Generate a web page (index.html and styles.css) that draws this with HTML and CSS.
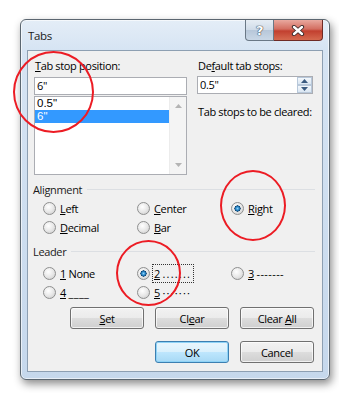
FILE: index.html
```html
<!DOCTYPE html>
<html>
<head>
<meta charset="utf-8">
<link rel="stylesheet" href="styles.css">
</head>
<body>
<div class="window">
  <div class="titlebar">
    <span class="title">Tabs</span>
    <div class="caption-btns">
      <div class="btn-help"><span>?</span></div>
      <div class="btn-close">
        <svg width="14" height="11" viewBox="0 0 14 11">
          <path d="M3 2 L11 9 M11 2 L3 9" stroke="#3a2a2a" stroke-width="4.2" stroke-linecap="round"/>
          <path d="M3 2 L11 9 M11 2 L3 9" stroke="#ffffff" stroke-width="2.4" stroke-linecap="round"/>
        </svg>
      </div>
    </div>
  </div>
  <div class="client">
    <div class="top">
      <div class="col-left">
        <div class="label"><u>T</u>ab stop position:</div>
        <div class="textbox">6"</div>
        <div class="listbox">
          <div class="items">
            <div class="item">0.5"</div>
            <div class="item sel">6"</div>
          </div>
          <div class="vscroll">
            <svg width="7" height="4" viewBox="0 0 7 4"><path d="M0 4 L3.5 0 L7 4 Z" fill="#b4b4b4"/></svg>
            <svg width="7" height="4" viewBox="0 0 7 4"><path d="M0 0 L3.5 4 L7 0 Z" fill="#b4b4b4"/></svg>
          </div>
        </div>
      </div>
      <div class="col-right">
        <div class="label">De<u>f</u>ault tab stops:</div>
        <div class="spinbox">
          <span class="spin-text">0.5"</span>
          <div class="spin">
            <div class="spin-btn"><svg width="7" height="4" viewBox="0 0 7 4"><path d="M0 4 L3.5 0 L7 4 Z" fill="#3a5a80"/></svg></div>
            <div class="spin-btn"><svg width="7" height="4" viewBox="0 0 7 4"><path d="M0 0 L3.5 4 L7 0 Z" fill="#3a5a80"/></svg></div>
          </div>
        </div>
        <div class="label cleared">Tab stops to be cleared:</div>
      </div>
    </div>

    <div class="group"><span class="group-label">Alignment</span><span class="rule"></span></div>
    <div class="radios">
      <div class="radio"><span class="dot"></span><span><u>L</u>eft</span></div>
      <div class="radio"><span class="dot"></span><span><u>C</u>enter</span></div>
      <div class="radio"><span class="dot on"></span><span><u>R</u>ight</span></div>
      <div class="radio"><span class="dot"></span><span><u>D</u>ecimal</span></div>
      <div class="radio"><span class="dot"></span><span><u>B</u>ar</span></div>
    </div>

    <div class="group leader-group"><span class="group-label">Leader</span><span class="rule"></span></div>
    <div class="radios leader">
      <div class="radio"><span class="dot"></span><span><u>1</u> None</span></div>
      <div class="radio"><span class="dot on"></span><span class="focus"><u>2</u> <span class="dots">.......</span></span></div>
      <div class="radio"><span class="dot"></span><span><u>3</u> <span class="dashes">-------</span></span></div>
      <div class="radio"><span class="dot"></span><span><u>4</u> <span class="unders">____</span></span></div>
      <div class="radio"><span class="dot"></span><span><u>5</u> <span class="dots">·······</span></span></div>
    </div>

    <div class="btn-row first">
      <div class="btn"><span><u>S</u>et</span></div>
      <div class="btn"><span>Cl<u>e</u>ar</span></div>
      <div class="btn"><span>Clear <u>A</u>ll</span></div>
    </div>
    <div class="btn-row">
      <div class="btn default"><span>OK</span></div>
      <div class="btn"><span>Cancel</span></div>
    </div>
  </div>
</div>
<div class="mark m1"></div>
<div class="mark m2"></div>
<div class="mark m3"></div>
</body>
</html>
```

FILE: styles.css
```css
html, body {
  margin: 0;
  padding: 0;
  background: #ffffff;
}
body {
  position: relative;
  width: 339px;
  height: 393px;
  overflow: hidden;
  font-family: "Open Sans", "Noto Sans", sans-serif;
  font-size: 11px;
  letter-spacing: -0.35px;
  color: #000;
}
u { text-decoration: underline; text-underline-offset: 1px; }

.window {
  margin: 19px 0 0 20px;
  width: 296px;
  height: 352px;
  border: 1px solid #5b6670;
  border-radius: 6px;
  background: linear-gradient(180deg, #e4edf7 0px, #d6e4f3 30px, #c6d8ec 100%);
  box-shadow: 2px 4px 8px rgba(0,0,0,0.45), inset 0 0 0 1px rgba(255,255,255,0.6);
  display: flex;
  flex-direction: column;
  padding: 0 6px 7px 6px;
}
.titlebar {
  height: 30px;
  display: flex;
  justify-content: space-between;
  align-items: flex-start;
}
.title {
  margin: 8px 0 0 1px;
  font-size: 11.5px;
  color: #1a1a1a;
}
.caption-btns {
  display: flex;
}
.btn-help {
  width: 27px;
  height: 20px;
  border: 1px solid #6a7886;
  border-top: none;
  border-radius: 0 0 0 4px;
  background: linear-gradient(180deg, #e6edf4 0%, #cfdbe8 50%, #b7c7d9 51%, #c9d7e6 100%);
  display: flex;
  align-items: center;
  justify-content: center;
}
.btn-help span {
  font-family: "DejaVu Sans", sans-serif;
  font-size: 13px;
  font-weight: bold;
  color: #ffffff;
  text-shadow: 0 0 1px #3c4856, 0 0 1px #3c4856, 0 0 1px #3c4856;
}
.btn-close {
  width: 48px;
  height: 20px;
  border: 1px solid #6e2a25;
  border-top: none;
  border-left: none;
  border-radius: 0 0 4px 0;
  background: linear-gradient(180deg, #e9a99f 0%, #d36e61 45%, #c2402f 55%, #d5694f 100%);
  display: flex;
  align-items: center;
  justify-content: center;
}

.client {
  flex: 1;
  background: #f0f0f0;
  border: 1px solid #8d9fb2;
  padding: 7px 7px 0 6px;
  position: relative;
}
.top {
  display: flex;
  gap: 10px;
  height: 124px;
}
.label {
  height: 15px;
  line-height: 15px;
  margin-left: 1px;
  white-space: nowrap;
}
.col-left { width: 153px; }
.col-right { width: 116px; }
.textbox {
  margin-top: 4px;
  height: 16px;
  border: 1px solid #abadb3;
  background: #fff;
  line-height: 16px;
  padding-left: 2px;
}
.listbox {
  margin-top: 1px;
  height: 77px;
  border: 1px solid #abadb3;
  background: #fff;
  display: flex;
}
.items { flex: 1; }
.item {
  height: 13px;
  line-height: 13px;
  padding-left: 2px;
  font-family: "Liberation Sans", "Open Sans", sans-serif;
  font-size: 11.5px;
  letter-spacing: 0;
}
.item.sel {
  background: #3399ff;
  color: #fff;
}
.vscroll {
  width: 16px;
  background: #f4f4f4;
  border-left: 1px solid #ececec;
  display: flex;
  flex-direction: column;
  justify-content: space-between;
  align-items: center;
  padding: 7px 0 7px;
}
.spinbox {
  margin-top: 3px;
  height: 16px;
  border: 1px solid #abadb3;
  background: #fff;
  display: flex;
  justify-content: space-between;
}
.spin-text {
  line-height: 16px;
  padding-left: 2px;
}
.spin {
  width: 15px;
  display: flex;
  flex-direction: column;
}
.spin-btn {
  flex: 1;
  border: 1px solid #b8c8da;
  background: linear-gradient(180deg, #f4f8fc, #dae6f2);
  display: flex;
  align-items: center;
  justify-content: center;
}
.cleared { margin-top: 10px; }

.group {
  display: flex;
  align-items: center;
  gap: 5px;
  height: 14px;
  margin-left: -1px;
}
.group-label { color: #1a1a1a; }
.rule {
  flex: 1;
  height: 0;
  border-top: 1px solid #dcdfe3;
  margin-top: 1px;
}
.radios {
  display: grid;
  grid-template-columns: 94px 94px 80px;
  grid-auto-rows: 19px;
  padding: 3px 0 0 9px;
}
.radios.leader { padding-top: 6px; }
.radio {
  display: flex;
  align-items: center;
  gap: 4px;
  white-space: nowrap;
}
.dot {
  width: 11px;
  height: 11px;
  border-radius: 50%;
  border: 1px solid #8e8f8f;
  background: radial-gradient(circle at 40% 35%, #ffffff 0%, #e8e8e8 50%, #c8c8c8 100%);
  flex: none;
}
.dot.on {
  background:
    radial-gradient(circle at 50% 50%, #8fd2f8 0%, #2383c6 24%, #0d3f6a 38%, transparent 42%),
    radial-gradient(circle at 40% 35%, #ffffff 0%, #e8e8e8 50%, #c8c8c8 100%);
}
.dots { letter-spacing: 1.2px; }
.dashes { letter-spacing: 0.4px; }
.unders { letter-spacing: 0.4px; }
.focus {
  outline: 1px dotted #333;
  outline-offset: 1px;
  padding-right: 1px;
}
.leader-group { margin-top: 7px; }

.btn-row {
  display: flex;
  justify-content: flex-end;
  gap: 11px;
  padding-right: 1px;
}
.btn-row.first { margin-top: 5px; }
.btn-row + .btn-row { margin-top: 12px; }
.btn {
  width: 72px;
  height: 20px;
  border: 1px solid #707070;
  border-radius: 3px;
  background: linear-gradient(180deg, #f2f2f2 0%, #ebebeb 50%, #dddddd 51%, #cfcfcf 100%);
  box-shadow: inset 0 0 0 1px rgba(255,255,255,0.7);
  display: flex;
  align-items: center;
  justify-content: center;
}
.btn.default {
  border-color: #3c7fb1;
  box-shadow: inset 0 0 0 1px #8fd3f6;
  background: linear-gradient(180deg, #eaf6fd 0%, #d9f0fc 50%, #bee6fd 51%, #a7d9f5 100%);
}

.mark {
  position: absolute;
  border: 2px solid #ec1c24;
  border-radius: 50%;
  box-sizing: border-box;
}
.m1 { left: 13px; top: 51px; width: 81px; height: 82px; }
.m2 { left: 220px; top: 170px; width: 66px; height: 71px; }
.m3 { left: 116px; top: 240px; width: 65px; height: 66px; }
```
